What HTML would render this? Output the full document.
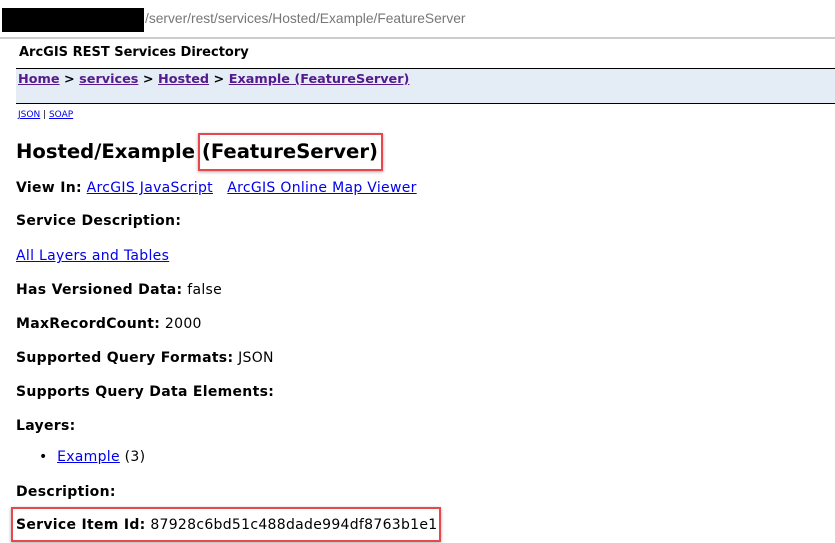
<!DOCTYPE html><html><head><style>
body{margin:0;width:835px;height:543px;overflow:hidden;background:#fff;font-family:"DejaVu Sans",Verdana,sans-serif;font-size:14px;letter-spacing:0.3px;color:#000;position:relative}
.a{position:absolute;white-space:nowrap}
a{color:#0000ee;text-decoration:underline}
b{font-weight:bold}
.rb{position:absolute;border:2px solid #e8484d;box-shadow:0 1px 3px rgba(0,0,0,.35)}
</style></head><body>
<div class="a" style="left:0;top:0;width:835px;height:36px;background:#fff"></div>
<div class="a" style="left:2px;top:8px;width:142px;height:24px;background:#000"></div>
<div class="a" style="left:145px;top:11px;font-family:'Liberation Sans',sans-serif;font-size:13.8px;letter-spacing:0;color:#777">/server/rest/services/Hosted/Example/FeatureServer</div>
<div class="a" style="left:0;top:37px;width:835px;height:2px;background:#ccc"></div>
<div class="a" style="left:19px;top:45px;font-weight:bold;font-size:13px;letter-spacing:0">ArcGIS REST Services Directory</div>
<div class="a" style="left:16px;top:68px;width:819px;height:34px;background:#e4ecf5;border-top:1px solid #000;border-bottom:1px solid #000"></div>
<div class="a" style="left:18px;top:72px;font-weight:bold;font-size:12.8px;letter-spacing:0"><a style="color:#551a8b">Home</a> &gt; <a style="color:#551a8b">services</a> &gt; <a style="color:#551a8b">Hosted</a> &gt; <a style="color:#551a8b">Example (FeatureServer)</a></div>
<div class="a" style="left:18px;top:110px;font-size:9px;letter-spacing:0"><a>JSON</a> | <a>SOAP</a></div>
<div class="a" style="left:16px;top:140px;font-weight:bold;font-size:19.6px;letter-spacing:0">Hosted/Example (FeatureServer)</div>
<div class="rb" style="left:198px;top:133px;width:181px;height:34px"></div>
<div class="a" style="left:16px;top:180px"><b>View In:</b> <a>ArcGIS JavaScript</a> &nbsp; <a>ArcGIS Online Map Viewer</a></div>
<div class="a" style="left:16px;top:213px"><b>Service Description:</b></div>
<div class="a" style="left:16px;top:248px"><a>All Layers and Tables</a></div>
<div class="a" style="left:16px;top:282px"><b>Has Versioned Data:</b> false</div>
<div class="a" style="left:16px;top:316px"><b>MaxRecordCount:</b> 2000</div>
<div class="a" style="left:16px;top:350px"><b>Supported Query Formats:</b> JSON</div>
<div class="a" style="left:16px;top:384px"><b>Supports Query Data Elements:</b></div>
<div class="a" style="left:16px;top:418px"><b>Layers:</b></div>
<div class="a" style="left:39px;top:449px">•&nbsp;&nbsp;<a>Example</a> (3)</div>
<div class="a" style="left:16px;top:484px"><b>Description:</b></div>
<div class="a" style="left:16px;top:517px"><b>Service Item Id:</b> 87928c6bd51c488dade994df8763b1e1</div>
<div class="rb" style="left:11px;top:507px;width:426px;height:31px"></div>
</body></html>
